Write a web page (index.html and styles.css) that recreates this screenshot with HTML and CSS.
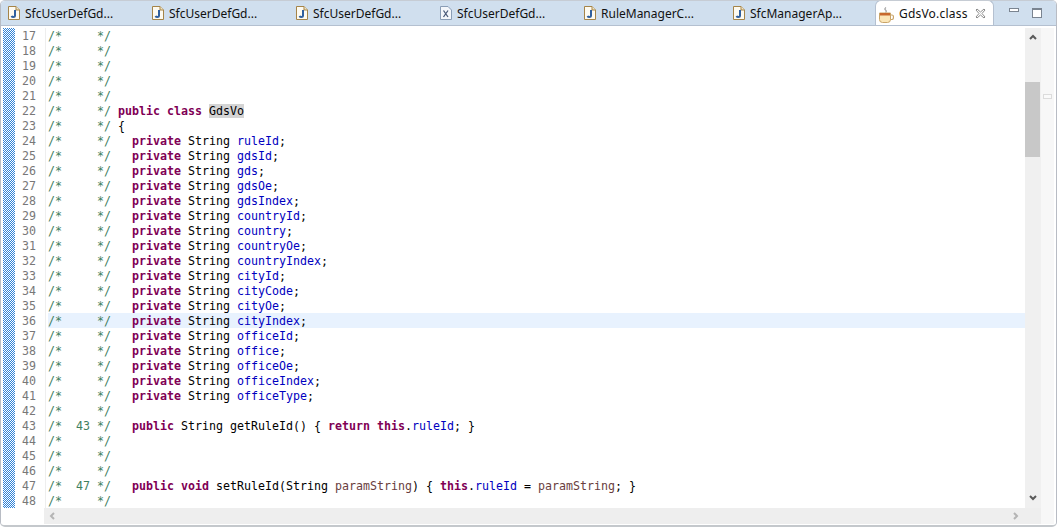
FILE: index.html
```html
<!DOCTYPE html>
<html lang="zh-CN">
<head>
    <meta charset="UTF-8">
    <title>GdsVo.class</title>
    <link rel="stylesheet" href="styles.css">
</head>
<body>
    <svg class="defs" width="0" height="0">
        <symbol id="icon-java" viewBox="0 0 12 14">
            <path d="M.5.5H8L11.500 4V13.500H.5Z" fill="#fdfaf0" stroke="#a58448"/>
            <path d="M8 .5V4H11.500" fill="#f3e6c4" stroke="#a58448"/>
            <path d="M7 4V9.500Q7 11 5.300 11Q4 11 3.500 10" fill="none" stroke="#2f5f9e" stroke-width="2"/>
        </symbol>
        <symbol id="icon-xml" viewBox="0 0 12 14">
            <path d="M.5.5H8L11.500 4V13.500H.5Z" fill="#f4f7fb" stroke="#8a9db5"/>
            <path d="M3.500 4.500L8 11M8 4.500L3.500 11" fill="none" stroke="#4a5a78" stroke-width="1.300"/>
        </symbol>
        <pattern id="hatch" width="2" height="2" patternUnits="userSpaceOnUse">
            <rect width="2" height="2" fill="#fff"/>
            <rect width="1" height="1" fill="#2f82d8"/>
            <rect x="1" y="1" width="1" height="1" fill="#2f82d8"/>
        </pattern>
    </svg>
    <div class="window">
        <div class="tabbar">
            <div class="tab"><svg class="tab-icon"><use href="#icon-java"/></svg><span>SfcUserDefGd...</span></div>
            <div class="tab"><svg class="tab-icon"><use href="#icon-java"/></svg><span>SfcUserDefGd...</span></div>
            <div class="tab"><svg class="tab-icon"><use href="#icon-java"/></svg><span>SfcUserDefGd...</span></div>
            <div class="tab"><svg class="tab-icon"><use href="#icon-xml"/></svg><span>SfcUserDefGd...</span></div>
            <div class="tab tab-wide"><svg class="tab-icon"><use href="#icon-java"/></svg><span>RuleManagerC...</span></div>
            <div class="tab tab-wide"><svg class="tab-icon"><use href="#icon-java"/></svg><span>SfcManagerAp...</span></div>
            <div class="tab tab-active">
                <svg class="cup-icon" viewBox="0 0 15 16">
                    <path d="M7 .5Q5 2 6.500 3Q8 4 6.500 5.500" fill="none" stroke="#a0a0a0" stroke-width="1.200"/>
                    <path d="M.5 6H11.500V12.500Q11.500 15.500 8.500 15.500H3.500Q.5 15.500 .5 12.500Z" fill="#fbe6b8" stroke="#c9a468"/>
                    <path d="M1 6H11V8.500H1Z" fill="#c8692e"/>
                    <path d="M11.500 8H13Q14.500 8 14.500 10Q14.500 12.500 13 12.500H11.500" fill="none" stroke="#c9a468" stroke-width="1.200"/>
                </svg>
                <span>GdsVo.class</span>
                <svg class="close-icon" viewBox="0 0 11 11">
                    <path d="M1 2L2 1L5.500 4L9 1L10 2L7 5.500L10 9L9 10L5.500 7L2 10L1 9L4 5.500Z" fill="#fff" stroke="#8c8c8c"/>
                </svg>
            </div>
            <div class="win-buttons">
                <span class="btn-min"></span>
                <span class="btn-max"></span>
            </div>
        </div>
        <div class="editor">
            <svg class="gutter"><rect width="12" height="480" fill="url(#hatch)"/></svg>
            <div class="numbers">
                <div>17</div><div>18</div><div>19</div><div>20</div><div>21</div><div>22</div><div>23</div><div>24</div>
                <div>25</div><div>26</div><div>27</div><div>28</div><div>29</div><div>30</div><div>31</div><div>32</div>
                <div>33</div><div>34</div><div>35</div><div>36</div><div>37</div><div>38</div><div>39</div><div>40</div>
                <div>41</div><div>42</div><div>43</div><div>44</div><div>45</div><div>46</div><div>47</div><div>48</div>
            </div>
            <div class="code">
                <div class="ln"><i>/*     */</i></div>
                <div class="ln"><i>/*     */</i></div>
                <div class="ln"><i>/*     */</i></div>
                <div class="ln"><i>/*     */</i></div>
                <div class="ln"><i>/*     */</i></div>
                <div class="ln"><i>/*     */</i> <b>public class</b> <mark>GdsVo</mark></div>
                <div class="ln"><i>/*     */</i> {</div>
                <div class="ln"><i>/*     */</i>   <b>private</b> String <u>ruleId</u>;</div>
                <div class="ln"><i>/*     */</i>   <b>private</b> String <u>gdsId</u>;</div>
                <div class="ln"><i>/*     */</i>   <b>private</b> String <u>gds</u>;</div>
                <div class="ln"><i>/*     */</i>   <b>private</b> String <u>gdsOe</u>;</div>
                <div class="ln"><i>/*     */</i>   <b>private</b> String <u>gdsIndex</u>;</div>
                <div class="ln"><i>/*     */</i>   <b>private</b> String <u>countryId</u>;</div>
                <div class="ln"><i>/*     */</i>   <b>private</b> String <u>country</u>;</div>
                <div class="ln"><i>/*     */</i>   <b>private</b> String <u>countryOe</u>;</div>
                <div class="ln"><i>/*     */</i>   <b>private</b> String <u>countryIndex</u>;</div>
                <div class="ln"><i>/*     */</i>   <b>private</b> String <u>cityId</u>;</div>
                <div class="ln"><i>/*     */</i>   <b>private</b> String <u>cityCode</u>;</div>
                <div class="ln"><i>/*     */</i>   <b>private</b> String <u>cityOe</u>;</div>
                <div class="ln ln-current"><i>/*     */</i>   <b>private</b> String <u>cityIndex</u>;</div>
                <div class="ln"><i>/*     */</i>   <b>private</b> String <u>officeId</u>;</div>
                <div class="ln"><i>/*     */</i>   <b>private</b> String <u>office</u>;</div>
                <div class="ln"><i>/*     */</i>   <b>private</b> String <u>officeOe</u>;</div>
                <div class="ln"><i>/*     */</i>   <b>private</b> String <u>officeIndex</u>;</div>
                <div class="ln"><i>/*     */</i>   <b>private</b> String <u>officeType</u>;</div>
                <div class="ln"><i>/*     */</i></div>
                <div class="ln"><i>/*  43 */</i>   <b>public</b> String getRuleId() { <b>return this</b>.<u>ruleId</u>; }</div>
                <div class="ln"><i>/*     */</i></div>
                <div class="ln"><i>/*     */</i></div>
                <div class="ln"><i>/*     */</i></div>
                <div class="ln"><i>/*  47 */</i>   <b>public void</b> setRuleId(String <em>paramString</em>) { <b>this</b>.<u>ruleId</u> = <em>paramString</em>; }</div>
                <div class="ln"><i>/*     */</i></div>
            </div>
            <div class="vscroll">
                <svg class="arrow" viewBox="0 0 8 6"><path d="M1 5L4 2L7 5" fill="none" stroke="#5a5a5a" stroke-width="2"/></svg>
                <div class="vthumb"></div>
                <svg class="arrow" viewBox="0 0 8 6"><path d="M1 1L4 4L7 1" fill="none" stroke="#5a5a5a" stroke-width="2"/></svg>
            </div>
            <div class="overview"><div class="overview-mark"></div></div>
            <div class="hscroll">
                <svg class="arrow" viewBox="0 0 6 8"><path d="M5 1L2 4L5 7" fill="none" stroke="#b4b4b4" stroke-width="2"/></svg>
                <svg class="arrow" viewBox="0 0 6 8"><path d="M1 1L4 4L1 7" fill="none" stroke="#b4b4b4" stroke-width="2"/></svg>
            </div>
        </div>
    </div>
</body>
</html>
```

FILE: styles.css
```css
html, body {
    margin: 0;
    padding: 0;
    height: 527px;
    overflow: hidden;
    background-color: #fff;
}
.defs {
    position: absolute;
}
.window {
    height: 527px;
    box-sizing: border-box;
    border-top: 1px solid #c6ccd4;
    border-left: 1px solid #b8bcc4;
    border-right: 1px solid #b8bcc4;
    border-bottom: 2px solid #c4c8cc;
    border-radius: 5px;
    display: flex;
    flex-direction: column;
    background-color: #fff;
    overflow: hidden;
}
.tabbar {
    height: 24px;
    flex: none;
    display: flex;
    background-color: #d0dfee;
    border-bottom: 1px solid #b4c0d0;
    font-family: "Noto Sans", sans-serif;
    font-size: 12px;
    color: #111;
}
.tab {
    width: 144px;
    flex: none;
    display: flex;
    align-items: center;
    padding-left: 7px;
    box-sizing: border-box;
}
.tab-wide {
    width: 149px;
}
.tab-icon {
    width: 12px;
    height: 14px;
    margin-right: 5px;
    flex: none;
}
.tab-active {
    width: 119px;
    height: 25px;
    padding-left: 3px;
    background-color: #fff;
    border: 1px solid #b4c0d0;
    border-bottom: none;
    border-radius: 6px 6px 0 0;
    margin-top: -1px;
    letter-spacing: 0.2px;
}
.cup-icon {
    width: 15px;
    height: 16px;
    margin-right: 5px;
    margin-top: 4px;
    flex: none;
}
.close-icon {
    width: 11px;
    height: 11px;
    margin-left: 7px;
    flex: none;
}
.win-buttons {
    display: flex;
    padding: 7px 0 0 15px;
    gap: 13px;
    align-items: flex-start;
}
.btn-min {
    width: 8px;
    height: 2px;
    border: 1px solid #7a8490;
    background-color: #fff;
}
.btn-max {
    width: 8px;
    height: 7px;
    border: 1px solid #7a8490;
    border-top-width: 2px;
    background-color: #fff;
}
.editor {
    flex: 1;
    display: grid;
    grid-template-columns: 12px 31px 979px 16px 13px;
    grid-template-rows: 480px 16px;
    padding: 2px 0 0 2px;
    min-height: 0;
    font-family: "DejaVu Sans Mono", monospace;
    font-size: 11.63px;
    line-height: 17px;
    background-color: #fff;
}
.gutter {
    width: 12px;
    height: 480px;
    shape-rendering: crispEdges;
}
.numbers {
    text-align: right;
    color: #787878;
    padding-right: 9px;
    border-right: 1px solid #eee;
    box-sizing: border-box;
    overflow: hidden;
}
.numbers div {
    height: 15px;
}
.code {
    overflow: hidden;
    color: #000;
    margin-left: 2px;
}
.ln {
    height: 15px;
    white-space: pre;
}
.ln-current {
    background-color: #e8f2fe;
}
.code i {
    font-style: normal;
    color: #3f7f5f;
}
.code b {
    color: #7f0055;
    font-weight: bold;
}
.code u {
    text-decoration: none;
    color: #0000c0;
}
.code em {
    font-style: normal;
    color: #6a3e3e;
}
.code mark {
    background-color: #d4d4d4;
    color: #000;
}
.vscroll {
    position: relative;
    background-color: #f0f0f0;
    display: flex;
    flex-direction: column;
    align-items: center;
    justify-content: space-between;
    padding: 5px 1px 6px 0;
    box-sizing: border-box;
}
.vthumb {
    position: absolute;
    left: 0;
    top: 54px;
    width: 15px;
    height: 75px;
    background-color: #c8c8c8;
}
.arrow {
    width: 8px;
    height: 8px;
}
.overview {
    grid-row: 1 / 3;
    grid-column: 5;
    background-color: #f7f7f7;
    padding: 66px 2px 0;
}
.overview-mark {
    height: 3px;
    border: 1px solid #dcdcdc;
    background-color: #fafafa;
}
.hscroll {
    grid-column: 3 / 5;
    grid-row: 2;
    background-color: #eee;
    margin-left: -2px;
    display: flex;
    align-items: center;
    justify-content: space-between;
    padding: 0 21px 0 4px;
}
```
